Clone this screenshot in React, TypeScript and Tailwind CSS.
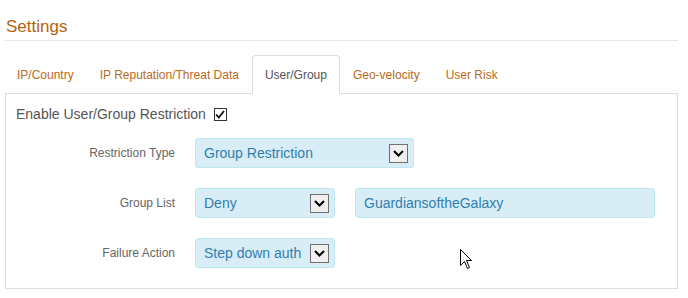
import type { ReactNode } from "react";

const tabs = ["IP/Country", "IP Reputation/Threat Data", "User/Group", "Geo-velocity", "User Risk"];
const ACTIVE_TAB = "User/Group";

function ArrowBox() {
  return (
    <span className="flex h-[19px] w-[19px] shrink-0 items-center justify-center border border-[#707070] bg-[#efefef]">
      <svg width="11" height="7" viewBox="0 0 11 7">
        <path d="M1 1 L5.5 5.5 L10 1" fill="none" stroke="#000" strokeWidth="2" />
      </svg>
    </span>
  );
}

function FakeSelect({ value, width }: { value: string; width: string }) {
  return (
    <div
      className={`flex h-[30px] ${width} items-center justify-between rounded-[3px] border border-[#bce8f1] bg-[#d9edf7] pl-2 pr-[5px] text-[14px] text-[#2f7fae]`}
    >
      <span className="whitespace-nowrap">{value}</span>
      <ArrowBox />
    </div>
  );
}

function Row({ label, children }: { label: string; children: ReactNode }) {
  return (
    <div className="flex h-[30px] items-center">
      <label className="mr-[20px] w-[159px] text-right text-[12px] text-[#666]">{label}</label>
      {children}
    </div>
  );
}

export default function App() {
  return (
    <div className="min-h-[298px] bg-white pt-[16px] font-['Liberation_Sans',Arial,sans-serif]">
      <div className="ml-[5px] w-[673px]">
        <h1 className="border-b border-[#e6e6e6] pb-[2px] pl-px text-[17px] leading-[22px] text-[#b5610f]">
          Settings
        </h1>

        <ul className="mt-[14px] flex border-b border-[#dddddd]">
          {tabs.map((tab, i) => {
            const active = tab === ACTIVE_TAB;
            return (
              <li
                key={tab}
                className={`-mb-px rounded-t-[4px] border px-3 pt-[11px] pb-[10px] text-[12px] leading-4 ${
                  i === 0 ? "-ml-px" : ""
                } ${
                  active
                    ? "border-[#dddddd] border-b-white bg-white text-[#555]"
                    : "border-transparent text-[#bb6a1a]"
                }`}
              >
                {tab}
              </li>
            );
          })}
        </ul>

        <div className="relative border-x border-b border-[#dddddd] pt-[10px] pb-[20px] pl-[10px]">
          <div className="flex h-[20px] items-center text-[14px] text-[#555]">
            <span>Enable User/Group Restriction</span>
            <span className="ml-[8px] flex h-[13px] w-[13px] items-center justify-center border border-[#333] bg-white">
              <svg width="10" height="9" viewBox="0 0 10 9">
                <path d="M1 4.5 L3.8 7.5 L9 1" fill="none" stroke="#000" strokeWidth="1.6" />
              </svg>
            </span>
          </div>

          <div className="mt-[14px] flex flex-col gap-[20px]">
            <Row label="Restriction Type">
              <FakeSelect value="Group Restriction" width="w-[219px]" />
            </Row>
            <Row label="Group List">
              <FakeSelect value="Deny" width="w-[140px]" />
              <div className="ml-[20px] flex h-[30px] w-[300px] items-center rounded-[3px] border border-[#bce8f1] bg-[#d9edf7] pl-2 text-[14px] text-[#2f7fae]">
                GuardiansoftheGalaxy
              </div>
            </Row>
            <Row label="Failure Action">
              <FakeSelect value="Step down auth" width="w-[140px]" />
            </Row>
          </div>

          <svg
            className="pointer-events-none absolute left-[454px] top-[155px]"
            width="13"
            height="21"
            viewBox="0 0 13 21"
          >
            <path
              d="M0.5 0.5 L0.5 16.5 L4.5 12.5 L7.5 19.5 L9.5 18.5 L6.5 11.5 L11.5 11.5 Z"
              fill="#fff"
              stroke="#000"
              strokeWidth="1"
            />
          </svg>
        </div>
      </div>
    </div>
  );
}
